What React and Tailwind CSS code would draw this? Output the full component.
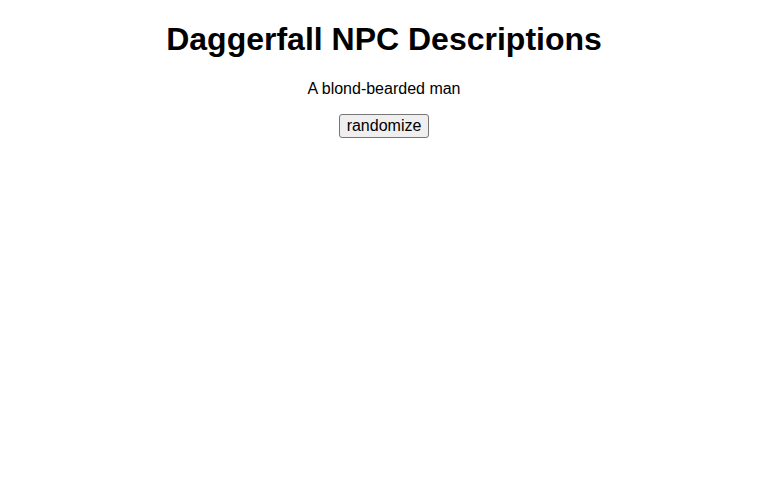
import { useState } from 'react';

const DESCRIPTIONS = [
  'A blond-bearded man',
  'A dark-haired woman',
  'A grey-bearded man',
  'A red-haired woman',
];

export default function App() {
  const [desc, setDesc] = useState(DESCRIPTIONS[0]);

  const randomize = () => {
    setDesc(DESCRIPTIONS[Math.floor(Math.random() * DESCRIPTIONS.length)]);
  };

  return (
    <div className="text-center text-black bg-white min-h-[480px] font-['Liberation_Sans',Arial,sans-serif] pt-px -mt-px">
      <h1 className="text-[32px] font-bold leading-[normal] my-[21.44px]">Daggerfall NPC Descriptions</h1>
      <p className="text-base leading-[normal] my-4">{desc}</p>
      <div className="flex justify-center">
        <button
          onClick={randomize}
          className="text-base leading-[normal] px-[7px] py-[2px] bg-[#efefef] border border-[#767676] rounded-[3px] text-black"
        >
          randomize
        </button>
      </div>
    </div>
  );
}
